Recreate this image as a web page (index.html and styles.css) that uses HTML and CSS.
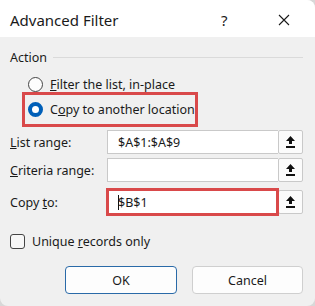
FILE: index.html
```html
<!DOCTYPE html>
<html lang="en">
<head>
  <meta charset="UTF-8">
  <title>Advanced Filter</title>
  <link rel="stylesheet" href="styles.css">
</head>
<body>
  <div class="dialog">
    <div class="title-bar">
      <span class="title">Advanced Filter</span>
      <span class="help">?</span>
      <span class="close">
        <svg width="12" height="12" viewBox="0 0 12 12"><path d="M1 1L11 11M11 1L1 11" stroke="#1a1a1a" stroke-width="1.1" fill="none"/></svg>
      </span>
    </div>

    <div class="content">
      <div class="group-head">
        <span>Action</span>
        <div class="group-line"></div>
      </div>

      <div class="radio-row first">
        <span class="radio"></span>
        <span><u>F</u>ilter the list, in-place</span>
      </div>
      <div class="radio-row second">
        <span class="radio checked"></span>
        <span>C<u>o</u>py to another location</span>
        <div class="mark mark-radio"></div>
      </div>

      <div class="field-row row-list">
        <label><u>L</u>ist range:</label>
        <div class="field">
          <div class="input">$A$1:$A$9</div>
          <div class="pick">
            <svg width="9" height="12" viewBox="0 0 9 12"><path d="M4.5 0L9 5H6V8H3V5H0Z" fill="#111"/><rect x="0" y="10" width="9" height="2" fill="#111"/></svg>
          </div>
        </div>
      </div>

      <div class="field-row row-criteria">
        <label><u>C</u>riteria range:</label>
        <div class="field">
          <div class="input"></div>
          <div class="pick">
            <svg width="9" height="12" viewBox="0 0 9 12"><path d="M4.5 0L9 5H6V8H3V5H0Z" fill="#111"/><rect x="0" y="10" width="9" height="2" fill="#111"/></svg>
          </div>
        </div>
      </div>

      <div class="field-row row-copy">
        <label>Copy <u>t</u>o:</label>
        <div class="field">
          <div class="input"><span class="caret"></span>$B$1</div>
          <div class="pick">
            <svg width="9" height="12" viewBox="0 0 9 12"><path d="M4.5 0L9 5H6V8H3V5H0Z" fill="#111"/><rect x="0" y="10" width="9" height="2" fill="#111"/></svg>
          </div>
          <div class="mark mark-input"></div>
        </div>
      </div>

      <div class="check-row">
        <span class="checkbox"></span>
        <span>Unique <u>r</u>ecords only</span>
      </div>

      <div class="buttons">
        <button class="btn default">OK</button>
        <button class="btn">Cancel</button>
      </div>
    </div>
  </div>
</body>
</html>
```

FILE: styles.css
```css
* {
  margin: 0;
  padding: 0;
  box-sizing: border-box;
}

body {
  width: 315px;
  height: 306px;
  background: #d8d8d8;
  font-family: 'Noto Sans', 'Open Sans', sans-serif;
  font-size: 12px;
  color: #1a1a1a;
  overflow: hidden;
}

.dialog {
  width: 315px;
  height: 306px;
  background: #f0f0f0;
  border-radius: 0 8px 8px 8px;
  overflow: hidden;
}

.title-bar {
  height: 37px;
  background: #ffffff;
  display: flex;
  align-items: center;
  padding-left: 10px;
}

.title {
  font-size: 15px;
  flex: 1;
  padding-top: 2px;
}

.help {
  font-size: 15px;
  width: 10px;
  margin-right: 47px;
  padding-top: 2px;
}

.close {
  width: 12px;
  margin-right: 25px;
  display: flex;
  padding-top: 3px;
}

.content {
  padding: 10px 12px 0 10px;
}

.group-head {
  display: flex;
  align-items: center;
  height: 20px;
  font-size: 12.5px;
}

.group-line {
  flex: 1;
  height: 1px;
  background: #dadada;
  margin-left: 6px;
  margin-top: 1px;
}

.radio-row {
  position: relative;
  display: flex;
  align-items: center;
  height: 25px;
  padding-left: 18px;
  gap: 7px;
  font-size: 12.5px;
}

.radio-row.first {
  margin-top: 5px;
}

.radio {
  width: 15px;
  height: 15px;
  border-radius: 50%;
  border: 1px solid #444;
  background: #fdfdfd;
}

.radio.checked {
  border: 4.5px solid #005fb8;
  background: #ffffff;
}

.mark {
  position: absolute;
  border: 3px solid #d9494a;
}

.mark-radio {
  left: 12px;
  top: -5px;
  width: 176px;
  height: 35px;
}

.field-row {
  display: flex;
  align-items: center;
  height: 24px;
  font-size: 12.5px;
}

.row-list {
  margin-top: 8px;
}

.row-criteria {
  margin-top: 4px;
}

.row-copy {
  margin-top: 8px;
}

.field-row label {
  width: 97px;
}

.field {
  position: relative;
  flex: 1;
  display: flex;
  height: 24px;
}

.input {
  flex: 1;
  background: #ffffff;
  border: 1px solid #c9c9c9;
  border-right: none;
  padding-left: 10px;
  display: flex;
  align-items: center;
  font-size: 12.5px;
}

.caret {
  width: 1px;
  height: 15px;
  background: #111;
  margin-right: -1px;
}

.pick {
  width: 25px;
  background: #fbfbfb;
  border: 1px solid #c9c9c9;
  border-radius: 2px;
  display: flex;
  align-items: center;
  justify-content: center;
}

.mark-input {
  left: -1px;
  top: -2px;
  width: 173px;
  height: 28px;
}

.check-row {
  display: flex;
  align-items: center;
  gap: 7px;
  height: 20px;
  margin-top: 17px;
  font-size: 12.5px;
}

.checkbox {
  width: 15px;
  height: 15px;
  border: 1px solid #444;
  border-radius: 3px;
  background: #f7f7f7;
}

.buttons {
  display: flex;
  justify-content: flex-end;
  gap: 15px;
  margin-top: 15px;
}

.btn {
  width: 111px;
  height: 28px;
  font-family: 'Noto Sans', 'Open Sans', sans-serif;
  font-size: 12.5px;
  color: #1a1a1a;
  background: #fdfdfd;
  border: 1px solid #cfcfcf;
  border-radius: 4px;
}

.btn.default {
  width: 112px;
  border: 1px solid #2a6aa8;
}
```
